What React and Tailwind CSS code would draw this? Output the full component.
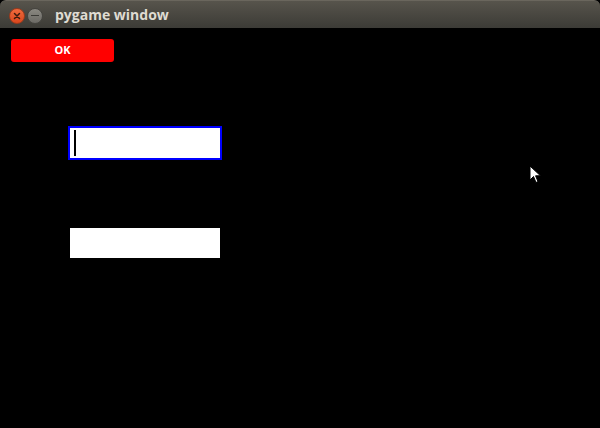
export default function App() {
  return (
    <div className="w-[600px] h-[428px] flex flex-col bg-black overflow-hidden" style={{ fontFamily: '"Open Sans", "DejaVu Sans", sans-serif' }}>
      <div className="h-[28px] flex items-center rounded-t-[6px] bg-gradient-to-b from-[#57544c] to-[#3c3b36] border-t border-[#6a665d]">
        <div className="ml-[9px] mt-[2px] w-[16px] h-[16px] rounded-full bg-gradient-to-b from-[#f06a3c] to-[#d9461c] flex items-center justify-center border border-[#9e3a1c]">
          <svg width="8" height="8" viewBox="0 0 8 8">
            <path d="M1.5 1.5 L6.5 6.5 M6.5 1.5 L1.5 6.5" stroke="#3a1a0c" strokeWidth="1.5" strokeLinecap="round" />
          </svg>
        </div>
        <div className="ml-[2px] mt-[2px] w-[16px] h-[16px] rounded-full bg-gradient-to-b from-[#8a8881] to-[#6c6a65] flex items-center justify-center border border-[#45443f]">
          <div className="w-[8px] h-[1.5px] bg-[#3b3a36]"></div>
        </div>
        <span className="ml-[12px] text-[14px] font-bold text-[#dfdbd2] leading-none">pygame window</span>
      </div>
      <div className="relative flex-1 flex flex-col items-start">
        <div className="ml-[11px] mt-[11px] w-[103px] h-[23px] bg-[#ff0000] rounded-[3px] flex items-center justify-center text-white text-[11px] font-bold" style={{ fontFamily: '"Open Sans", sans-serif' }}>
          OK
        </div>
        <div className="ml-[68px] mt-[64px] w-[154px] h-[34px] border-2 border-[#0000ff] bg-white flex items-center pl-[4px]">
          <div className="w-[2px] h-[26px] bg-black"></div>
        </div>
        <div className="ml-[70px] mt-[68px] w-[150px] h-[30px] bg-white"></div>
        <svg className="absolute left-[529px] top-[137px]" width="13" height="19" viewBox="0 0 13 19">
          <path d="M1 1 L1 15 L4.5 11.5 L7 17.5 L9 16.6 L6.6 10.8 L11.5 10.8 Z" fill="#ffffff" stroke="#000000" strokeWidth="1" strokeLinejoin="round" />
        </svg>
      </div>
    </div>
  );
}
